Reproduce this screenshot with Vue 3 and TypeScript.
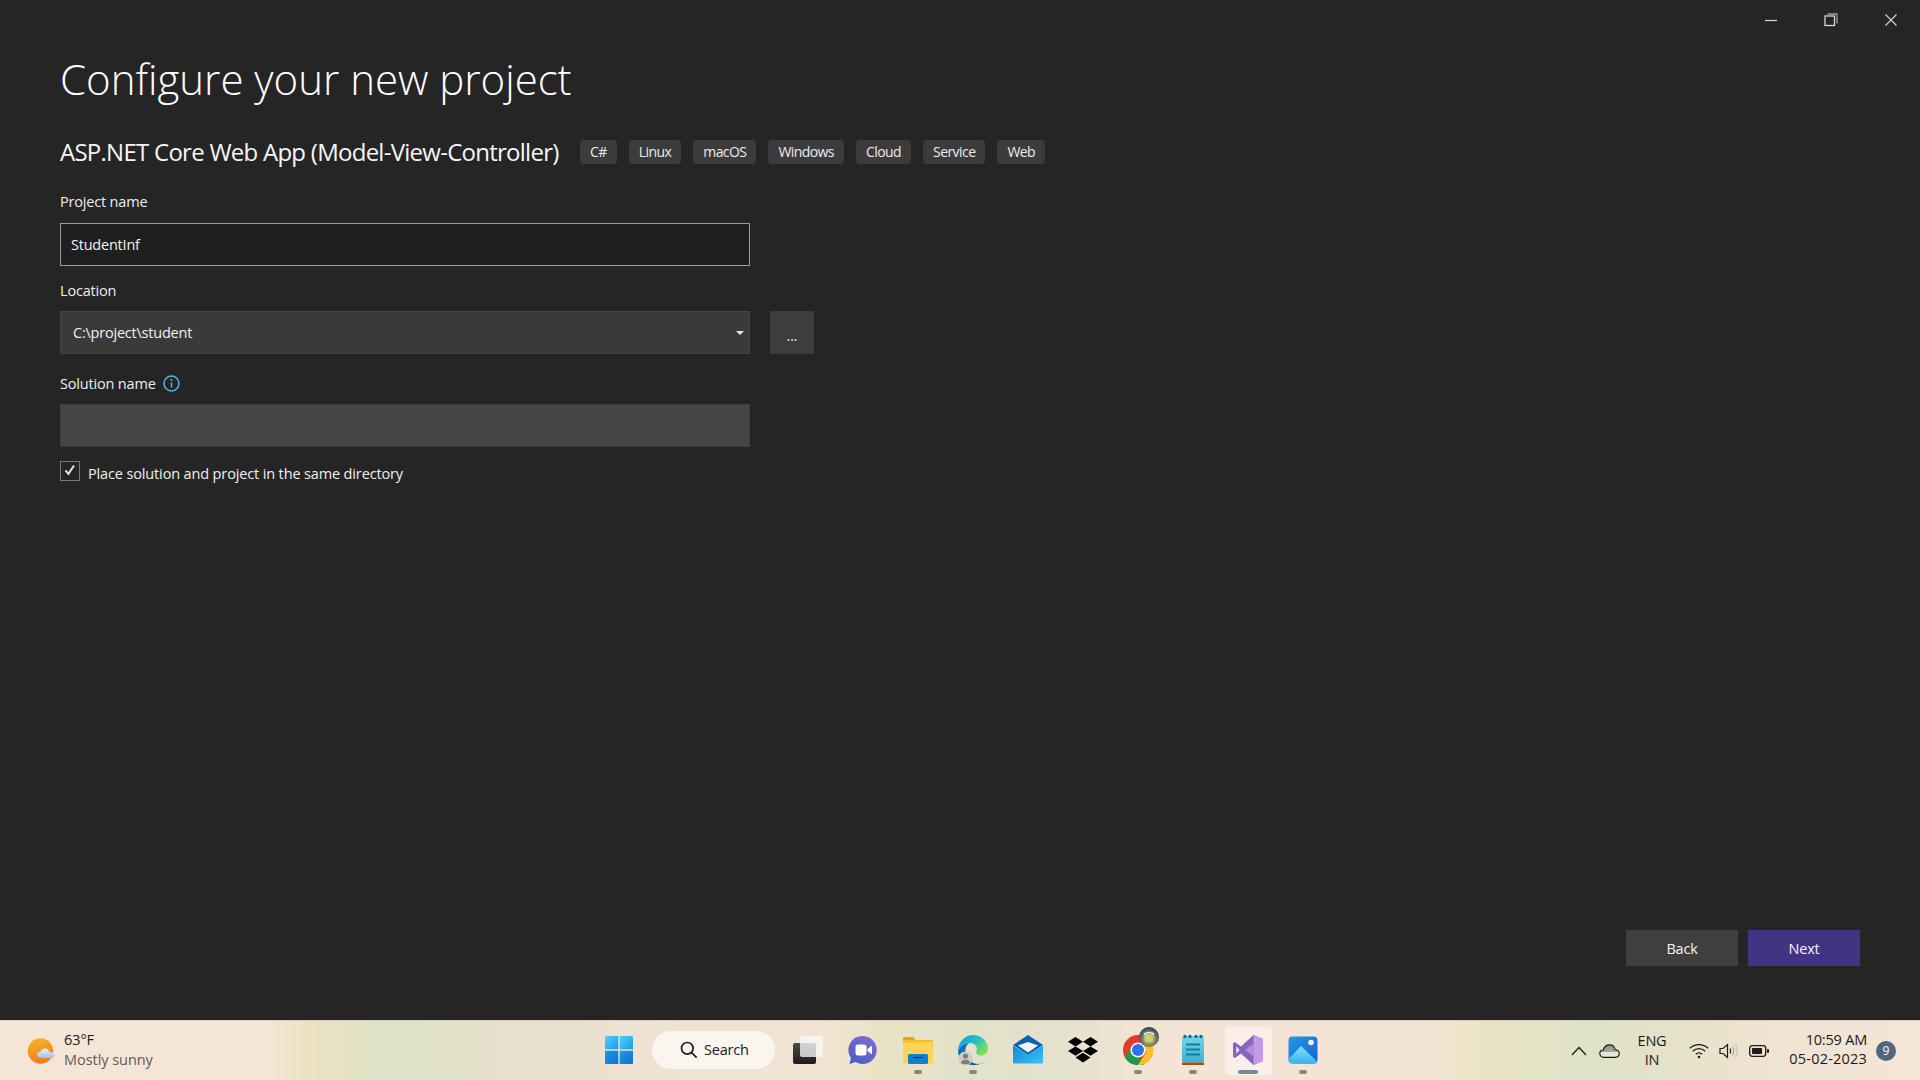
<script setup lang="ts">
const tags: string[] = ['C#', 'Linux', 'macOS', 'Windows', 'Cloud', 'Service', 'Web']
</script>

<template>
  <div class="page">
    <main class="main">
      <div class="winctl">
        <svg width="12" height="12" viewBox="0 0 12 12"><path d="M0 6.500H12" stroke="#d8d8d8" stroke-width="1.200" fill="none"/></svg>
        <svg width="14" height="14" viewBox="0 0 14 14" fill="none" stroke="#d8d8d8"><rect x="1" y="3" width="9.500" height="9.500" stroke-width="1.300" /><path d="M3.500 1H13V10.500" stroke="#9c9c9c" stroke-width="1.300"/></svg>
        <svg width="12" height="12" viewBox="0 0 12 12"><path d="M0.500 0.500L11.500 11.500M11.500 0.500L0.500 11.500" stroke="#d8d8d8" stroke-width="1.100" fill="none"/></svg>
      </div>
      <h1 class="title">Configure your new project</h1>
      <div class="subrow">
        <h2 class="subtitle">ASP.NET Core Web App (Model-View-Controller)</h2>
        <div class="tags">
          <span v-for="t in tags" :key="t" class="tag">{{ t }}</span>
        </div>
      </div>
      <label class="label first">Project name</label>
      <div class="field field-active">StudentInf</div>
      <label class="label second">Location</label>
      <div class="locrow">
        <div class="field field-combo">
          <span>C:\project\student</span>
          <span class="caret"></span>
        </div>
        <button class="browse">...</button>
      </div>
      <div class="label third">
        <span>Solution name</span>
        <svg class="info" width="17" height="17" viewBox="0 0 17 17" fill="none"><circle cx="8.500" cy="8.500" r="7.500" stroke="#4fb6e6" stroke-width="1.500"/><path d="M8.500 7.500V12.500" stroke="#4fb6e6" stroke-width="1.500"/><circle cx="8.500" cy="5" r="1" fill="#4fb6e6"/></svg>
      </div>
      <div class="field field-disabled"></div>
      <div class="check">
        <span class="box">
          <svg width="14" height="14" viewBox="0 0 14 14" fill="none"><path d="M2.500 7.500L5.500 10.800L11 2.500" stroke="#e6e6e6" stroke-width="2"/></svg>
        </span>
        <span class="checktext">Place solution and project in the same directory</span>
      </div>
      <div class="spacer"></div>
      <div class="actions">
        <button class="btn">Back</button>
        <button class="btn primary">Next</button>
      </div>
    </main>

    <footer class="taskbar">
      <div class="weather">
        <svg width="30" height="28" viewBox="0 0 30 28">
          <defs>
            <linearGradient id="sun" x1="0.300" y1="0" x2="0.600" y2="1"><stop offset="0" stop-color="#f5b32a"/><stop offset="1" stop-color="#f4791a"/></linearGradient>
            <linearGradient id="cl" x1="0" y1="0" x2="0" y2="1"><stop offset="0" stop-color="#e8f0fa"/><stop offset="1" stop-color="#9cc0ee"/></linearGradient>
          </defs>
          <circle cx="13.500" cy="14" r="12.700" fill="url(#sun)"/>
          <path d="M14 21C11.500 21 10 19.500 10 17.500C10 15.500 11.500 14.500 13.500 14.500C14.500 12 17 11 19 11.500C21 12 22 13.500 22.300 15C25 15 27.500 16 27.500 18.200C27.500 20 26 21 24 21Z" fill="url(#cl)"/>
        </svg>
        <div class="wtext">
          <div class="wtemp">63°F</div>
          <div class="wdesc">Mostly sunny</div>
        </div>
      </div>

      <div class="apps">
        <svg class="winlogo" width="30" height="30" viewBox="0 0 30 30">
          <defs>
            <linearGradient id="w1" x1="0" y1="0" x2="1" y2="1"><stop offset="0" stop-color="#52d0f9"/><stop offset="1" stop-color="#1a9ae8"/></linearGradient>
            <linearGradient id="w2" x1="0" y1="0" x2="1" y2="1"><stop offset="0" stop-color="#1c9be8"/><stop offset="1" stop-color="#0f72cc"/></linearGradient>
          </defs>
          <path d="M1 2.500A1.500 1.500 0 0 1 2.500 1H14.300V14.300H1Z" fill="url(#w1)"/>
          <path d="M15.700 1H27.500A1.500 1.500 0 0 1 29 2.500V14.300H15.700Z" fill="url(#w1)"/>
          <path d="M1 15.700H14.300V29H2.500A1.500 1.500 0 0 1 1 27.500Z" fill="url(#w2)"/>
          <path d="M15.700 15.700H29V27.500A1.500 1.500 0 0 1 27.500 29H15.700Z" fill="url(#w2)"/>
        </svg>

        <div class="search">
          <svg width="18" height="18" viewBox="0 0 18 18" fill="none" stroke="#1c1c1c" stroke-width="1.700"><circle cx="7.300" cy="7.300" r="5.800"/><path d="M11.600 11.600L16.700 16.700"/></svg>
          <span>Search</span>
        </div>

        <div class="slot taskview">
          <svg width="32" height="30" viewBox="0 0 32 30">
            <defs><linearGradient id="tv" x1="0" y1="0" x2="0" y2="1"><stop offset="0" stop-color="#4a4a4a"/><stop offset="1" stop-color="#1c1c1c"/></linearGradient></defs>
            <rect x="1" y="8" width="23" height="21" rx="2" fill="url(#tv)"/>
            <rect x="8" y="1" width="23" height="21" rx="2" fill="#f9f7f5" fill-opacity="0.780"/>
          </svg>
        </div>

        <div class="slot">
          <svg width="30" height="30" viewBox="0 0 30 30">
            <defs><linearGradient id="t1" x1="0.800" y1="0" x2="0.200" y2="1"><stop offset="0" stop-color="#7e6cd0"/><stop offset="1" stop-color="#4b5ec4"/></linearGradient></defs>
            <path d="M15 1A14 14 0 1 1 7.500 27L1.500 29L3 23A14 14 0 0 1 15 1Z" fill="url(#t1)"/>
            <rect x="7.500" y="9.500" width="11" height="11" rx="2.500" fill="#fff"/>
            <path d="M19.500 14L24 10.500V19.500L19.500 16Z" fill="#fff"/>
          </svg>
        </div>

        <div class="slot">
          <svg width="30" height="30" viewBox="0 0 30 30">
            <path d="M0 3.500A1.500 1.500 0 0 1 1.500 2H10L13 5.500H0Z" fill="#e6a313"/>
            <path d="M0 6H30V27A1.500 1.500 0 0 1 28.500 28.500H1.500A1.500 1.500 0 0 1 0 27Z" fill="#ffd35a"/>
            <path d="M0 5H30V7L0 8Z" fill="#f5bd2c"/>
            <rect x="5" y="19" width="20" height="10" rx="1.500" fill="#0f7fd2"/>
            <path d="M10 22.500H20" stroke="#063e70" stroke-width="1.200"/>
          </svg>
          <i class="dot"></i>
        </div>

        <div class="slot">
          <svg width="32" height="32" viewBox="0 0 32 32">
            <defs>
              <linearGradient id="e1" x1="0" y1="0" x2="1" y2="0.600"><stop offset="0" stop-color="#1597e0"/><stop offset="0.550" stop-color="#25bdc4"/><stop offset="1" stop-color="#7fdc5a"/></linearGradient>
              <linearGradient id="e2" x1="0" y1="0" x2="1" y2="1"><stop offset="0" stop-color="#1078c8"/><stop offset="1" stop-color="#0a4a94"/></linearGradient>
            </defs>
            <path d="M16 1C25 1 31 7.500 31 14.500C31 19 27.500 21.500 24 21.500C21 21.500 19 20 19 18.500C19 17.500 20 17 20 15C20 11.500 16.500 9 12.500 9C7.500 9 3 12 1 17C1 8 8 1 16 1Z" fill="url(#e1)"/>
            <path d="M1 17C3 12 7.500 9 12.500 9C9 11 8 14 8.500 18C9.300 24 14 30 21 30C24 30 27 28.500 28.500 26.500C26 30 21 31 16 31C8 31 1 25 1 17Z" fill="url(#e2)"/>
            <circle cx="8.500" cy="24.500" r="7" fill="#cfcdca"/>
            <circle cx="8.500" cy="22" r="2.600" fill="#807f7c"/>
            <path d="M3.800 29C4.500 26.500 6.500 25.500 8.500 25.500C10.500 25.500 12.500 26.500 13.200 29C11.500 30.800 5.500 30.800 3.800 29Z" fill="#807f7c"/>
          </svg>
          <i class="dot"></i>
        </div>

        <div class="slot">
          <svg width="30" height="30" viewBox="0 0 30 30">
            <defs><linearGradient id="m1" x1="0" y1="0" x2="1" y2="1"><stop offset="0" stop-color="#1583d8"/><stop offset="1" stop-color="#36c6f5"/></linearGradient></defs>
            <path d="M0 10L15 0L30 10L15 20Z" fill="#0f62b4"/>
            <path d="M5 10.500L15 7L25 10.500L15 17.500Z" fill="#f4f4f4"/>
            <path d="M0 10.500L15 20L30 10.500V27.500A1 1 0 0 1 29 28.500H1A1 1 0 0 1 0 27.500Z" fill="url(#m1)"/>
          </svg>
        </div>

        <div class="slot">
          <svg width="30" height="26" viewBox="0 0 30 26" fill="#000">
            <path d="M7.500 0L15 4.700L7.500 9.400L0 4.700Z"/>
            <path d="M22.500 0L30 4.700L22.500 9.400L15 4.700Z"/>
            <path d="M7.500 9.400L15 14.100L7.500 18.800L0 14.100Z"/>
            <path d="M22.500 9.400L30 14.100L22.500 18.800L15 14.100Z"/>
            <path d="M15 15.800L22.500 20.500L15 25.500L7.500 20.500Z"/>
          </svg>
        </div>

        <div class="slot">
          <svg class="chrome" width="42" height="42" viewBox="0 0 42 42">
            <defs>
              <radialGradient id="b1" cx="0.500" cy="0.600" r="0.550"><stop offset="0" stop-color="#cfd06a"/><stop offset="0.550" stop-color="#8a9160"/><stop offset="0.800" stop-color="#59606a"/><stop offset="1" stop-color="#3d424c"/></radialGradient>
            </defs>
            <circle cx="15" cy="27" r="15" fill="#e5392b"/>
            <path d="M15 42A15 15 0 0 1 2 34.500L9 22L15 33L21 42Z" fill="#1c9a4b"/>
            <path d="M15 42L22.700 30L21 19.500H28.500A15 15 0 0 1 15 42Z" fill="#fbc02d"/>
            <circle cx="15" cy="27" r="7.600" fill="#fff"/>
            <circle cx="15" cy="27" r="6" fill="#2a73e8"/>
            <circle cx="26" cy="14" r="10" fill="url(#b1)"/>
            <path d="M21 11H31L30 19H22Z" fill="#d8d97a" fill-opacity="0.700"/>
            <path d="M21 11Q26 8 31 11" stroke="#e6e9ee" stroke-width="1.500" fill="none"/>
          </svg>
          <i class="dot"></i>
        </div>

        <div class="slot">
          <svg width="24" height="32" viewBox="0 0 24 32">
            <defs><linearGradient id="n1" x1="0" y1="0" x2="0" y2="1"><stop offset="0" stop-color="#78d3ea"/><stop offset="1" stop-color="#3ab0d2"/></linearGradient></defs>
            <rect x="1" y="2" width="22" height="26.500" rx="2" fill="url(#n1)"/>
            <path d="M1 28.500H23V31H1Z" fill="#a04e12"/>
            <g fill="#0b6f94"><circle cx="4" cy="2.500" r="1.700"/><circle cx="9" cy="2.500" r="1.700"/><circle cx="15" cy="2.500" r="1.700"/><circle cx="20" cy="2.500" r="1.700"/></g>
            <path d="M5 10.500H19M5 15.500H19M5 20.500H19" stroke="#0f7fa4" stroke-width="2"/>
          </svg>
          <i class="dot"></i>
        </div>

        <div class="slot active">
          <svg width="30" height="30" viewBox="0 0 30 30">
            <path d="M20.500 0L30 4V26L20.500 30L8 18.500L2 23L0 21.700V8.300L2 7L8 11.500Z" fill="#8465bf"/>
            <path d="M20.500 0L30 4V26L20.500 30Z" fill="#c39be9"/>
            <path d="M20.500 8.500L12 15L20.500 21.500Z" fill="#b48ce0"/>
            <path d="M3.300 11.200L6.500 15L3.300 18.800Z" fill="#f8eee6"/>
          </svg>
          <i class="bar"></i>
        </div>

        <div class="slot">
          <svg width="30" height="28" viewBox="0 0 30 28">
            <defs>
              <linearGradient id="p1" x1="0" y1="0" x2="1" y2="1"><stop offset="0" stop-color="#1e9be6"/><stop offset="1" stop-color="#1a5fc8"/></linearGradient>
              <linearGradient id="p2" x1="0" y1="0" x2="0" y2="1"><stop offset="0" stop-color="#8ae2f8"/><stop offset="1" stop-color="#34b2f0"/></linearGradient>
            </defs>
            <rect x="0.500" y="0.500" width="29" height="27" rx="4" fill="url(#p1)"/>
            <circle cx="23" cy="6.500" r="2.800" fill="#f4f4f4"/>
            <path d="M0.500 23L13 10L29.500 26A4 4 0 0 1 26 27.500H4.500A4 4 0 0 1 0.500 23Z" fill="url(#p2)"/>
          </svg>
          <i class="dot"></i>
        </div>
      </div>

      <div class="tray">
        <svg class="chev" width="16" height="10" viewBox="0 0 16 10" fill="none" stroke="#1c1c1c" stroke-width="1.300"><path d="M1 9L8 1.500L15 9"/></svg>
        <svg class="cloud" width="21" height="14" viewBox="0 0 21 14">
          <defs><linearGradient id="od" x1="0" y1="0" x2="0" y2="1"><stop offset="0" stop-color="#8f8f88"/><stop offset="0.550" stop-color="#a5a59c"/><stop offset="0.560" stop-color="#e6e5d6"/><stop offset="1" stop-color="#e6e5d6"/></linearGradient></defs>
          <path d="M5 13.300C2.300 13.300 0.800 11.500 0.800 9.500C0.800 7.500 2.200 6 4.300 6C5 3 7.500 0.800 10.500 0.800C13.500 0.800 15.500 3 16 5.500C18.500 5.800 20.200 7.300 20.200 9.500C20.200 11.800 18.500 13.300 16 13.300Z" fill="url(#od)" stroke="#1c1c1c" stroke-width="1.200"/>
        </svg>
        <div class="lang"><div>ENG</div><div>IN</div></div>
        <svg class="wifi" width="20" height="16" viewBox="0 0 20 16" fill="none" stroke="#1c1c1c" stroke-width="1.300"><path d="M0.800 5.300C6 0.300 14 0.300 19.200 5.300"/><path d="M3.800 8.300C7.500 4.800 12.500 4.800 16.200 8.300"/><path d="M6.800 11.200C8.800 9.500 11.200 9.500 13.200 11.200"/><circle cx="10" cy="14" r="1.300" fill="#1c1c1c" stroke="none"/></svg>
        <svg class="vol" width="20" height="16" viewBox="0 0 20 16" fill="none" stroke="#1c1c1c" stroke-width="1.200"><path d="M1 5.500H4L8.500 1.500V14.500L4 10.500H1Z"/><path d="M11 5.500Q12.500 8 11 10.500"/><path d="M13.500 3.500Q16 8 13.500 12.500" stroke="#a9a898"/><path d="M16.500 1.500Q20 8 16.500 14.500" stroke="#c4c2b2"/></svg>
        <svg class="batt" width="20" height="12" viewBox="0 0 20 12"><rect x="0.700" y="0.700" width="16" height="10.600" rx="2.500" fill="none" stroke="#1c1c1c" stroke-width="1.300"/><rect x="3" y="3" width="10" height="6" rx="0.800" fill="#1c1c1c"/><rect x="18" y="4" width="2" height="4" rx="1" fill="#1c1c1c"/></svg>
        <div class="clock"><div>10:59 AM</div><div class="date">05-02-2023</div></div>
        <div class="badge">9</div>
      </div>
    </footer>
  </div>
</template>

<style>
html, body { margin: 0; padding: 0; background: #252525; }
</style>

<style scoped>
.page {
  width: 1920px;
  height: 1080px;
  display: flex;
  flex-direction: column;
  overflow: hidden;
  background: #252525;
  color: #f2f2f2;
  font-family: "Open Sans", "Noto Sans", sans-serif;
}
.main {
  position: relative;
  flex: 1;
  box-sizing: border-box;
  padding: 0 60px 54px;
  display: flex;
  flex-direction: column;
  min-height: 0;
}
.winctl {
  position: absolute;
  top: 13px;
  right: 23px;
  display: flex;
  align-items: center;
  gap: 47px;
}
.title {
  margin: 50px 0 0;
  font-size: 42px;
  line-height: 58px;
  font-weight: 300;
  letter-spacing: -0.02px;
  color: #fff;
}
.subrow {
  margin-top: 29px;
  display: flex;
  align-items: center;
  height: 30px;
}
.subtitle {
  margin: 0;
  font-size: 24px;
  line-height: 30px;
  font-weight: 400;
  letter-spacing: -0.74px;
  color: #f6f6f6;
  width: 520px;
  white-space: nowrap;
}
.tags {
  display: flex;
  gap: 12px;
}
.tag {
  box-sizing: border-box;
  height: 24px;
  line-height: 24px;
  padding: 0 10px;
  border-radius: 4px;
  background: #3c3c3c;
  font-size: 14px;
  letter-spacing: -0.57px;
  color: #ececec;
}
.label {
  font-size: 14.500px;
  line-height: 20px;
  letter-spacing: -0.18px;
  color: #eeeeee;
  display: flex;
  align-items: center;
}
.first { margin-top: 25px; }
.second { margin-top: 15px; }
.third { margin-top: 20px; }
.info { margin: -1px 0 0 7px; }
.field {
  box-sizing: border-box;
  width: 690px;
  height: 43px;
  margin-top: 11px;
  font-size: 14.500px;
  letter-spacing: -0.22px;
  display: flex;
  align-items: center;
  color: #f2f2f2;
}
.field-active {
  padding-left: 10px;
  background: #1f1f1f;
  border: 1px solid #9a9a9a;
}
.locrow {
  display: flex;
  gap: 20px;
  margin-top: 10px;
}
.field-combo {
  margin-top: 0;
  padding: 0 5px 0 12px;
  background: #3a3a3a;
  border: 1px solid #444444;
  justify-content: space-between;
}
.caret {
  width: 0;
  height: 0;
  border-left: 4px solid transparent;
  border-right: 4px solid transparent;
  border-top: 4px solid #e8e8e8;
}
.browse {
  width: 44px;
  height: 43px;
  background: #3d3d3d;
  border: 0;
  padding: 6px 0 0;
  color: #f0f0f0;
  font: inherit;
  font-size: 14px;
}
.field-disabled {
  margin-top: 10px;
  background: #454545;
  border: 1px solid #3d3d3d;
}
.check {
  display: flex;
  align-items: center;
  margin-top: 14px;
  height: 20px;
}
.box {
  box-sizing: border-box;
  width: 20px;
  height: 20px;
  border: 1px solid #777777;
  display: flex;
  align-items: flex-start;
  justify-content: center;
  padding-top: 1px;
}
.checktext {
  margin-left: 8px;
  margin-top: 5px;
  font-size: 14.500px;
  letter-spacing: -0.14px;
  color: #f0f0f0;
}
.spacer { flex: 1; }
.actions {
  display: flex;
  justify-content: flex-end;
  gap: 10px;
}
.btn {
  width: 112px;
  height: 36px;
  border: 0;
  padding: 0;
  background: #3f3f3f;
  color: #f4f4f4;
  font: inherit;
  font-size: 14.500px;
  letter-spacing: -0.2px;
}
.primary { background: #433483; }

.taskbar {
  height: 60px;
  flex: none;
  box-sizing: border-box;
  border-top: 1px solid #d8cec4;
  display: flex;
  align-items: center;
  color: #1a1a1a;
  background: linear-gradient(90deg,
    #f5e5d7 0, #f5e5d7 270px, #ece3c2 306px, #dfe2c6 380px, #e0e2c8 420px, #e6e0cc 500px,
    #eee2d2 640px, #f2e4d5 800px, #e9e3c5 894px, #e2e2c9 960px, #e4e1cd 1060px,
    #f3e4d5 1150px, #f4e4d6 1420px, #ebe4c4 1480px, #dfe2c8 1590px, #e6e2ca 1680px, #f0e3d2 1780px, #f5e5d7 1920px);
}
.weather {
  width: 604px;
  flex: none;
  box-sizing: border-box;
  padding-left: 27px;
  display: flex;
  align-items: center;
  gap: 7px;
}
.wtext { line-height: 20px; margin-top: -2px; }
.wtemp { font-size: 14.500px; letter-spacing: -0.1px; }
.wdesc { font-size: 14.500px; letter-spacing: -0.05px; color: #5e5a56; }
.apps {
  display: flex;
  align-items: center;
  height: 100%;
}
.winlogo { margin: 0 18px 2px 0; }
.search {
  box-sizing: border-box;
  width: 123px;
  height: 38px;
  margin: 0 5.500px 2px 0;
  padding-left: 28px;
  border-radius: 19px;
  background: #fbf5f0;
  display: flex;
  align-items: center;
  gap: 6px;
  font-size: 14.500px;
  letter-spacing: -0.2px;
}
.slot {
  position: relative;
  box-sizing: border-box;
  width: 55px;
  height: 100%;
  padding-bottom: 2px;
  display: flex;
  align-items: center;
  justify-content: center;
}
.chrome { margin: -11px 0 0 12px; }
.dot {
  position: absolute;
  left: 23px;
  bottom: 6px;
  width: 8px;
  height: 4px;
  border-radius: 2px;
  background: #8c8379;
}
.active::before {
  content: "";
  position: absolute;
  inset: 6px 4px 5px;
  border-radius: 5px;
  background: #f9efe8;
}
.active svg { position: relative; }
.bar {
  position: absolute;
  left: 17px;
  bottom: 6px;
  width: 20px;
  height: 4px;
  border-radius: 2px;
  background: #6f8a99;
}
.tray {
  margin-left: auto;
  display: flex;
  align-items: center;
  padding-right: 24px;
}
.cloud { margin-left: 12px; }
.lang {
  width: 40px;
  margin-left: 12px;
  margin-top: -2px;
  text-align: center;
  font-size: 14.500px;
  line-height: 19px;
  letter-spacing: -0.2px;
}
.wifi { margin-left: 17px; }
.vol { margin-left: 10px; }
.batt { margin-left: 10px; }
.clock {
  margin-left: 20px;
  margin-top: -3px;
  width: 78px;
  text-align: right;
  font-size: 14.500px;
  line-height: 19px;
  letter-spacing: -0.2px;
  white-space: nowrap;
}
.date { letter-spacing: 0.2px; }
.badge {
  margin-left: 9px;
  width: 20px;
  height: 20px;
  border-radius: 50%;
  background: #4a6880;
  color: #fff;
  font-size: 12px;
  line-height: 20px;
  text-align: center;
}
</style>
